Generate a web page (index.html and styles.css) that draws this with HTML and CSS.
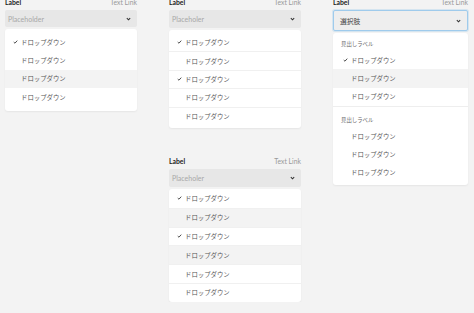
FILE: index.html
```html
<!DOCTYPE html>
<html lang="ja">
<head>
<meta charset="utf-8">
<title>Dropdown</title>
<link rel="stylesheet" href="styles.css">
</head>
<body>
<div class="board">
  <div class="col">
    <div class="field">
      <div class="field-head"><span class="label">Label</span><span class="link">Text Link</span></div>
      <div class="select"><span class="ph">Placeholder</span><svg class="chev" viewBox="0 0 6 4"><path d="M1 1 L3 3 L5 1"/></svg></div>
      <ul class="menu">
        <li class="item checked"><svg class="check" viewBox="0 0 6 5"><path d="M0.8 2.6 L2.3 4 L5.2 0.8"/></svg>ドロップダウン</li>
        <li class="item">ドロップダウン</li>
        <li class="item hover">ドロップダウン</li>
        <li class="item">ドロップダウン</li>
      </ul>
    </div>
  </div>
  <div class="col">
    <div class="field">
      <div class="field-head"><span class="label">Label</span><span class="link">Text Link</span></div>
      <div class="select tall"><span class="ph">Placeholer</span><svg class="chev" viewBox="0 0 6 4"><path d="M1 1 L3 3 L5 1"/></svg></div>
      <ul class="menu lined">
        <li class="item checked"><svg class="check" viewBox="0 0 6 5"><path d="M0.8 2.6 L2.3 4 L5.2 0.8"/></svg>ドロップダウン</li>
        <li class="item">ドロップダウン</li>
        <li class="item checked"><svg class="check" viewBox="0 0 6 5"><path d="M0.8 2.6 L2.3 4 L5.2 0.8"/></svg>ドロップダウン</li>
        <li class="item">ドロップダウン</li>
        <li class="item">ドロップダウン</li>
      </ul>
    </div>
    <div class="field lower">
      <div class="field-head"><span class="label">Label</span><span class="link">Text Link</span></div>
      <div class="select tall"><span class="ph">Placeholer</span><svg class="chev" viewBox="0 0 6 4"><path d="M1 1 L3 3 L5 1"/></svg></div>
      <ul class="menu lined flush">
        <li class="item checked"><svg class="check" viewBox="0 0 6 5"><path d="M0.8 2.6 L2.3 4 L5.2 0.8"/></svg>ドロップダウン</li>
        <li class="item hover">ドロップダウン</li>
        <li class="item checked"><svg class="check" viewBox="0 0 6 5"><path d="M0.8 2.6 L2.3 4 L5.2 0.8"/></svg>ドロップダウン</li>
        <li class="item hover">ドロップダウン</li>
        <li class="item">ドロップダウン</li>
        <li class="item">ドロップダウン</li>
      </ul>
    </div>
  </div>
  <div class="col">
    <div class="field">
      <div class="field-head"><span class="label">Label</span><span class="link">Text Link</span></div>
      <div class="select focus"><span class="val">選択肢</span><svg class="chev" viewBox="0 0 6 4"><path d="M1 1 L3 3 L5 1"/></svg></div>
      <div class="menu grouped">
        <div class="group">
          <div class="group-title">見出しラベル</div>
          <div class="item checked"><svg class="check" viewBox="0 0 6 5"><path d="M0.8 2.6 L2.3 4 L5.2 0.8"/></svg>ドロップダウン</div>
          <div class="item hover">ドロップダウン</div>
          <div class="item">ドロップダウン</div>
        </div>
        <div class="group">
          <div class="group-title">見出しラベル</div>
          <div class="item">ドロップダウン</div>
          <div class="item">ドロップダウン</div>
          <div class="item">ドロップダウン</div>
        </div>
      </div>
    </div>
  </div>
</div>
</body>
</html>
```

FILE: styles.css
```css
* { box-sizing: border-box; }
html, body {
  margin: 0;
  background: #f3f3f3;
}
body {
  padding: 0 5px;
  font-family: Lato, "Noto Sans CJK JP", sans-serif;
  color: #333;
  overflow: hidden;
}
.board {
  display: grid;
  grid-template-columns: 132px 132px 135px;
  column-gap: 32px;
  align-items: start;
  margin-top: -3px;
}
.col {
  display: flex;
  flex-direction: column;
}
.field-head {
  height: 10px;
  display: flex;
  align-items: center;
  justify-content: space-between;
  font-size: 6.8px;
  line-height: 10px;
}
.label {
  font-weight: 700;
  color: #222;
}
.link {
  color: #999;
}
.select {
  margin-top: 3px;
  height: 17px;
  background: #e7e7e7;
  border-radius: 2px;
  display: flex;
  align-items: center;
  justify-content: space-between;
  padding: 0 6px 0 3px;
  font-size: 7px;
}
.select.tall { height: 18px; }
.select.focus {
  height: 21px;
  border: 1px solid #9fcbec;
  background: #eeeeee;
  box-shadow: 0 0 0 1px rgba(159, 203, 236, 0.35);
  padding-left: 6px;
}
.ph { color: #a8a8a8; }
.val {
  color: #444;
  font-family: "Noto Sans CJK JP", sans-serif;
  font-size: 6.8px;
}
.chev {
  width: 5px;
  height: 4px;
  fill: none;
  stroke: #333;
  stroke-width: 1.3;
}
.menu {
  list-style: none;
  margin: 2px 0 0;
  padding: 4px 0;
  background: #fff;
  border-radius: 3px;
  box-shadow: 0 1px 2px rgba(0, 0, 0, 0.06);
}
.menu.lined { padding: 3px 0; }
.menu.flush { padding: 0; }
.item {
  height: 18.4px;
  display: flex;
  align-items: center;
  padding-left: 16px;
  font-family: "Noto Sans CJK JP", sans-serif;
  font-size: 6.4px;
  color: #555;
  position: relative;
}
.menu.lined .item + .item { border-top: 1px solid #f0f0f0; }
.menu.flush .item { height: 18.8px; }
.item.hover { background: #f3f3f3; }
.item.checked { padding-left: 8px; }
.check {
  width: 5px;
  height: 4px;
  margin-right: 3px;
  fill: none;
  stroke: #333;
  stroke-width: 1.1;
}
.menu.grouped { padding: 0 0 3px; }
.group { padding-top: 4px; }
.group + .group {
  border-top: 1px solid #eeeeee;
  padding-top: 6px;
}
.group-title {
  height: 14px;
  display: flex;
  align-items: center;
  padding-left: 8px;
  font-family: "Noto Sans CJK JP", sans-serif;
  font-size: 5.4px;
  color: #666;
}
.menu.grouped .item { padding-left: 18px; height: 18.3px; }
.menu.grouped .item.checked { padding-left: 10px; }
.lower { margin-top: 28px; }
```
